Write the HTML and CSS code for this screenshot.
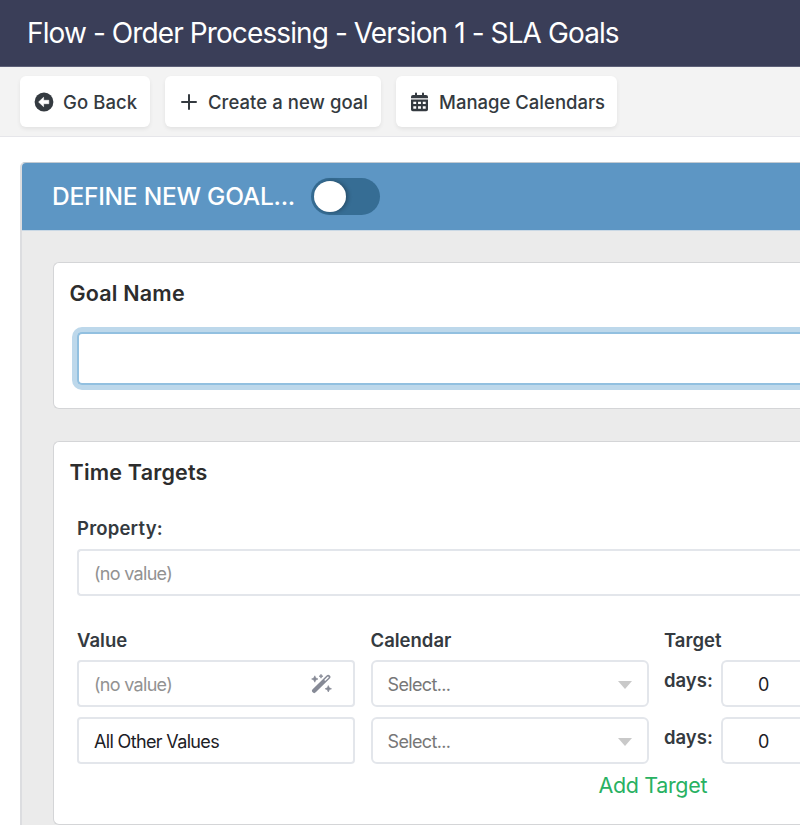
FILE: index.html
```
<!DOCTYPE html>
<html lang="en">

<head>
    <meta charset="UTF-8">
    <title>SLA Goals</title>
    <link rel="stylesheet" href="styles.css">
</head>

<body>
    <header class="title-bar">
        <h1>Flow - Order Processing - Version 1 - SLA Goals</h1>
    </header>

    <nav class="toolbar">
        <button class="btn back">
            <svg width="20" height="20" viewBox="0 0 20 20">
                <circle cx="10" cy="10" r="9.4" fill="#343a40"/>
                <path d="M4.6 10l5-4.7v3h5.2v3.4H9.6v3z" fill="#fff" stroke="#fff" stroke-width=".6" stroke-linejoin="round"/>
            </svg>
            <span>Go Back</span>
        </button>
        <button class="btn create">
            <svg width="16" height="16" viewBox="0 0 16 16">
                <path d="M8 1v14M1 8h14" stroke="#343a40" stroke-width="2" stroke-linecap="round"/>
            </svg>
            <span>Create a new goal</span>
        </button>
        <button class="btn manage">
            <svg width="17" height="20" viewBox="0 0 17 20">
                <path d="M5 1.4v3M12 1.4v3" stroke="#343a40" stroke-width="2" stroke-linecap="round"/>
                <path d="M2 3h13a2 2 0 0 1 2 2v1.3H0V5a2 2 0 0 1 2-2z" fill="#343a40"/>
                <path fill-rule="evenodd" fill="#343a40" d="M0 7.4h17v10a1.800 1.800 0 0 1-1.800 1.800H1.800A1.800 1.800 0 0 1 0 17.400zM2.300 9.700v2.400h2.900V9.700zM7.050 9.700v2.400h2.900V9.700zM11.800 9.700v2.400h2.900V9.700zM2.300 14.300v2.400h2.900v-2.400zM7.050 14.300v2.400h2.900v-2.400zM11.800 14.300v2.400h2.900v-2.400z"/>
            </svg>
            <span>Manage Calendars</span>
        </button>
    </nav>

    <main class="panel">
        <div class="panel-head">
            <h2>DEFINE NEW GOAL...</h2>
            <div class="switch"><div class="knob"></div></div>
        </div>
        <div class="panel-body">
            <section class="card">
                <h3>Goal Name</h3>
                <input type="text" class="goal-name">
            </section>

            <section class="card targets">
                <h3>Time Targets</h3>
                <label class="property-label">Property:</label>
                <div class="field property"><span class="muted">(no value)</span></div>

                <div class="grid">
                    <label>Value</label>
                    <label>Calendar</label>
                    <label>Target</label>

                    <div class="field">
                        <span class="muted">(no value)</span>
                        <svg class="wand" width="21" height="20" viewBox="0 0 21 20">
                            <path d="M3.200 16.800L17.200 3" stroke="#868a96" stroke-width="4.400" stroke-linecap="round"/>
                            <path d="M14.200 6l2.800-2.800" stroke="#fff" stroke-width="1.500" stroke-linecap="round"/>
                            <path fill="#868a96" d="M3.800 1.800l1 2.200 2.200 1-2.200 1-1 2.200-1-2.200-2.200-1 2.200-1zM10 .2l.6 1.400 1.400.6-1.400.6-.6 1.400-.6-1.400L8 2.200l1.400-.6zM17.300 11.600l1 2.200 2.200 1-2.200 1-1 2.200-1-2.200-2.200-1 2.200-1z" stroke="#868a96" stroke-width=".6"/>
                        </svg>
                    </div>
                    <div class="field select"><span>Select...</span><i class="caret"></i></div>
                    <div class="days"><label>days:</label><div class="field number">0</div></div>

                    <div class="field"><span class="other">All Other Values</span></div>
                    <div class="field select"><span>Select...</span><i class="caret"></i></div>
                    <div class="days"><label>days:</label><div class="field number">0</div></div>
                </div>
                <a class="add">Add Target</a>
            </section>
        </div>
    </main>
</body>

</html>
```
FILE: styles.css
```
* {
    box-sizing: border-box;
}

body {
    margin: 0;
    background: #fff;
    color: #343a40;
    font-family: Inter, "Liberation Sans", sans-serif;
}

h1,
h2,
h3 {
    margin: 0;
}

svg {
    display: block;
    fill: none;
}

.title-bar {
    height: 67px;
    padding-left: 27px;
    background: #3a3e58;
    border-bottom: 1px solid #5d6078;
}

h1 {
    color: #fff;
    font-size: 28px;
    font-weight: 400;
    line-height: 66px;
    letter-spacing: -0.9px;
    white-space: nowrap;
}

.toolbar {
    display: flex;
    gap: 15px;
    height: 70px;
    padding: 9px 20px;
    background: #f3f3f3;
    border-bottom: 1px solid #e6e6ea;
}

.btn {
    display: flex;
    align-items: center;
    height: 51px;
    padding: 0 0 0 14px;
    border: none;
    border-radius: 6px;
    background: #fff;
    box-shadow: 0 2px 4px rgba(0, 0, 0, 0.07);
    color: #343a40;
    font-family: inherit;
    font-size: 18.5px;
    font-weight: 500;
    white-space: nowrap;
}

.back {
    width: 130px;
    gap: 9px;
    letter-spacing: 0.1px;
}

.create {
    width: 216px;
    padding-left: 16px;
    gap: 11px;
    letter-spacing: 0.05px;
}

.manage {
    width: 221px;
    padding-left: 15px;
    gap: 11px;
}

.panel {
    height: 663px;
    margin: 25px 0 0 20px;
    border-top: 1px solid #c3cad1;
    border-left: 2px solid #dcdde0;
    border-radius: 5px 0 0 0;
    background: #ebebeb;
}

.panel-head {
    display: flex;
    align-items: center;
    height: 68px;
    padding-left: 30px;
    border-bottom: 1px solid #c9d8e5;
    border-radius: 4px 0 0 0;
    background: #5d96c4;
}

h2 {
    width: 259px;
    padding-bottom: 2px;
    color: #fff;
    font-size: 24.5px;
    font-weight: 500;
    letter-spacing: -0.25px;
}

.switch {
    width: 69px;
    height: 37px;
    padding: 3px;
    border-radius: 19px;
    background: #366d94;
}

.knob {
    width: 32px;
    height: 31px;
    border-radius: 50%;
    background: #fff;
    box-shadow: 2px 0 4px rgba(0, 0, 0, 0.3);
}

.panel-body {
    padding: 31px 0 0 31px;
}

/* cards and full width fields stay open on the right edge */
.card {
    height: 147px;
    margin-bottom: 32px;
    padding: 15px 0 0 23px;
    border: 1px solid #d4d5d7;
    border-right: none;
    border-radius: 6px 0 0 6px;
    background: #fff;
}

h3 {
    margin-left: -7.5px;
    color: #2d2d2d;
    font-size: 21.5px;
    font-weight: 600;
    line-height: 30px;
    letter-spacing: 0.2px;
}

.goal-name {
    display: block;
    width: 100%;
    height: 53px;
    margin-top: 24px;
    border: 2px solid #92c0e0;
    border-right: none;
    border-radius: 5px 0 0 5px;
    outline: none;
    box-shadow: 0 0 0 5px #bdd8eb;
}

.targets {
    height: 384px;
    margin-bottom: 0;
}

label {
    font-size: 18.5px;
    font-weight: 600;
    line-height: 24px;
}

.property-label {
    display: block;
    margin-top: 29px;
    letter-spacing: 0.2px;
}

.field {
    display: flex;
    align-items: center;
    height: 47px;
    padding: 1px 15px 0;
    border: 2px solid #e3e6eb;
    border-radius: 4px;
    font-size: 18px;
}

.property {
    margin-top: 9px;
    border-right: none;
    border-radius: 4px 0 0 4px;
}

.muted {
    color: #929292;
    letter-spacing: -0.7px;
}

.grid {
    display: grid;
    grid-template-columns: 278px 278px 1fr;
    column-gap: 15.5px;
    row-gap: 10px;
    margin-top: 32px;
}

.grid > label {
    margin-bottom: -2px;
}

.wand {
    margin: 0 6px 0 auto;
}

.select {
    border-radius: 6px;
    color: #777;
    letter-spacing: -0.65px;
}

.caret {
    margin: 1px 0 0 auto;
    border: 7.5px solid transparent;
    border-top: 8px solid #c9c9c9;
    border-bottom: 0;
}

.days {
    display: flex;
}

.days label {
    width: 57px;
    padding-top: 8px;
}

.number {
    flex: 1;
    padding-left: 35px;
    border-right: none;
    border-radius: 6px 0 0 6px;
    color: #1c2025;
}

.other {
    color: #1c2025;
    letter-spacing: -0.65px;
}

.add {
    display: block;
    margin: 6px 0 0 521.5px;
    color: #28b162;
    font-size: 21.5px;
    line-height: 30px;
    letter-spacing: -0.35px;
}
```
